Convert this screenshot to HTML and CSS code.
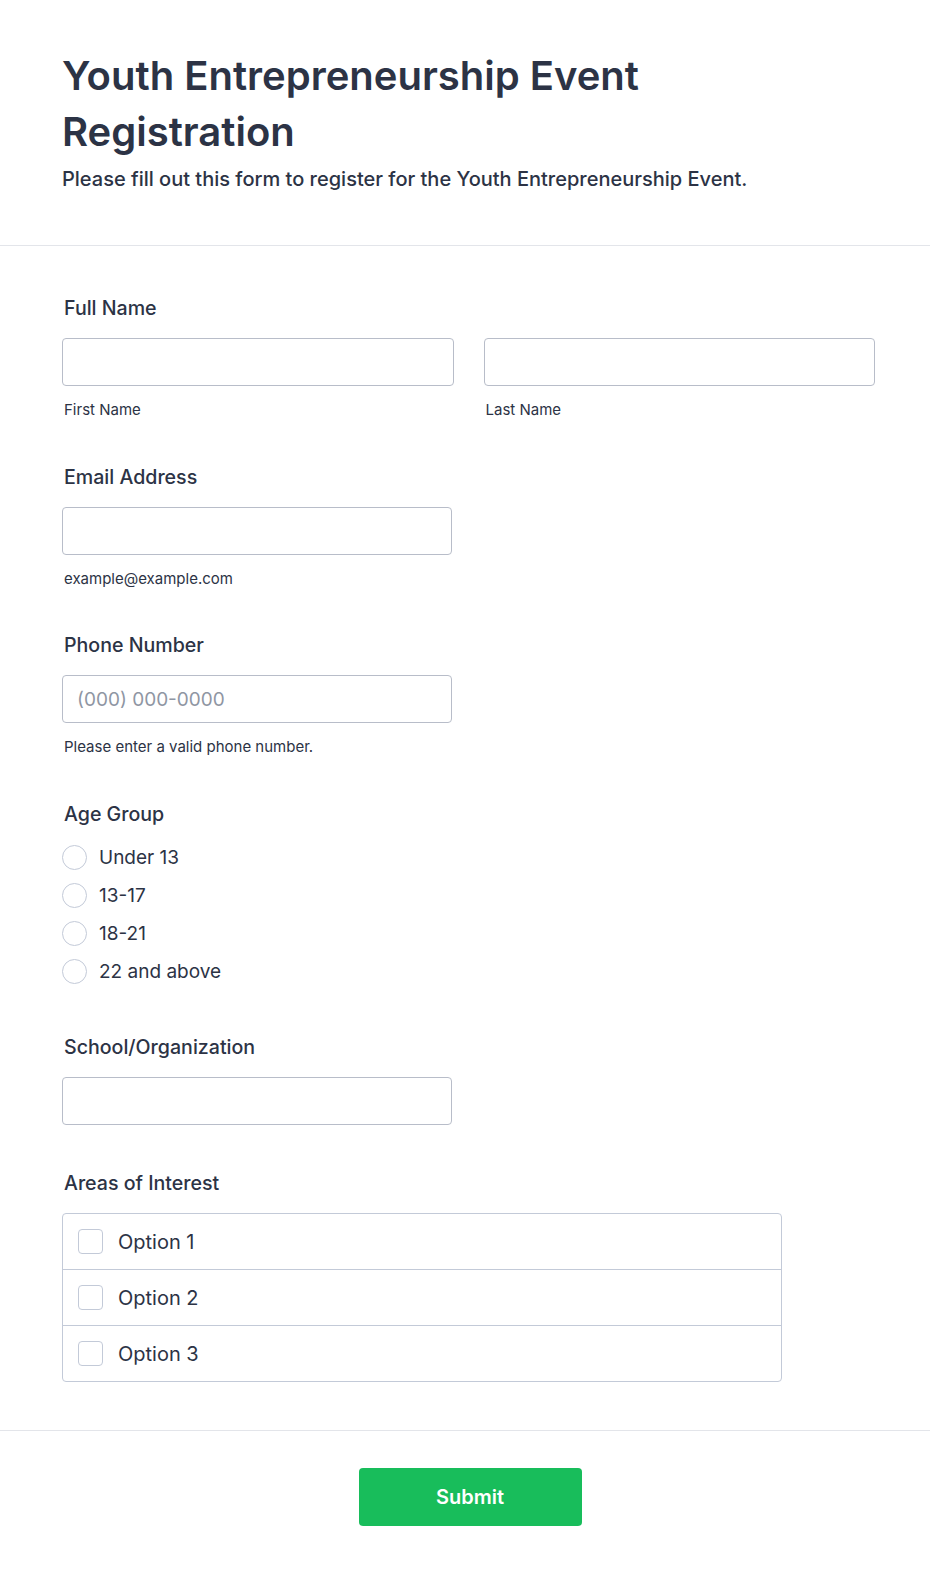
FILE: index.html
```html
<!DOCTYPE html>
<html>
<head>
    <title>Youth Entrepreneurship Event Registration</title>
    <link rel="stylesheet" href="styles.css">
</head>
<body>
    <div class="page-wrapper">
        <header class="form-header">
            <h1>Youth Entrepreneurship Event Registration</h1>
            <p class="form-subtitle">Please fill out this form to register for the Youth Entrepreneurship Event.</p>
        </header>
        <form class="form-body" onsubmit="event.preventDefault()">
            <div class="field">
                <label class="field-label">Full Name</label>
                <div class="name-row">
                    <div class="name-col">
                        <input type="text" class="text-input" name="firstName">
                        <span class="sublabel">First Name</span>
                    </div>
                    <div class="name-col">
                        <input type="text" class="text-input" name="lastName">
                        <span class="sublabel">Last Name</span>
                    </div>
                </div>
            </div>
            <div class="field">
                <label class="field-label" for="email">Email Address</label>
                <input type="email" id="email" class="text-input half" name="email">
                <span class="sublabel">example@example.com</span>
            </div>
            <div class="field">
                <label class="field-label" for="phone">Phone Number</label>
                <input type="tel" id="phone" class="text-input half" name="phone" placeholder="(000) 000-0000">
                <span class="sublabel">Please enter a valid phone number.</span>
            </div>
            <div class="field">
                <label class="field-label">Age Group</label>
                <div class="radio-list">
                    <label class="radio-item"><input type="radio" name="age"><span class="radio-mark"></span>Under 13</label>
                    <label class="radio-item"><input type="radio" name="age"><span class="radio-mark"></span>13-17</label>
                    <label class="radio-item"><input type="radio" name="age"><span class="radio-mark"></span>18-21</label>
                    <label class="radio-item"><input type="radio" name="age"><span class="radio-mark"></span>22 and above</label>
                </div>
            </div>
            <div class="field">
                <label class="field-label" for="school">School/Organization</label>
                <input type="text" id="school" class="text-input half" name="school">
            </div>
            <div class="field field-interest">
                <label class="field-label">Areas of Interest</label>
                <div class="check-box">
                    <label class="check-item"><input type="checkbox" name="interest"><span class="check-mark"></span>Option 1</label>
                    <label class="check-item"><input type="checkbox" name="interest"><span class="check-mark"></span>Option 2</label>
                    <label class="check-item"><input type="checkbox" name="interest"><span class="check-mark"></span>Option 3</label>
                </div>
            </div>
        </form>
        <footer class="form-footer">
            <button type="submit" class="btn-submit">Submit</button>
        </footer>
    </div>
</body>
</html>
```

FILE: styles.css
```css
:root {
    --text-color: #2c3345;
    --border-color: #b8bdc9;
    --control-border: #c3cad8;
    --divider: #e3e5ea;
    --placeholder: #8f96a3;
    --green: #18bd5b;
    --white: #ffffff;
}
* {
    box-sizing: border-box;
}
body {
    margin: 0;
    font-family: Inter, "Noto Sans", sans-serif;
    color: var(--text-color);
    background-color: var(--white);
}
.form-header {
    padding: 48px 62px 54px;
    border-bottom: 1px solid var(--divider);
}
h1 {
    margin: 0;
    font-size: 40px;
    line-height: 56px;
    font-weight: 600;
    max-width: 620px;
}
.form-subtitle {
    margin: 7px 0 0;
    font-size: 20px;
    line-height: 24px;
    font-weight: 500;
}
.form-body {
    display: flex;
    flex-direction: column;
    gap: 44.7px;
    padding: 50px 62px 48px;
    border-bottom: 1px solid var(--divider);
}
.field {
    display: flex;
    flex-direction: column;
    align-items: flex-start;
}
.field-interest {
    margin-top: 2px;
}
.field-label {
    font-size: 19.6px;
    line-height: 24px;
    font-weight: 500;
    padding-left: 2px;
    margin-bottom: 18px;
}
.name-row {
    display: flex;
    gap: 30px;
    width: 813px;
}
.name-col {
    flex: 1;
    display: flex;
    flex-direction: column;
}
.text-input {
    width: 100%;
    height: 48px;
    padding: 0 14px;
    border: 1px solid var(--border-color);
    border-radius: 4px;
    font-family: inherit;
    font-size: 19px;
    color: var(--text-color);
}
.text-input.half {
    width: 390px;
}
.text-input::placeholder {
    color: var(--placeholder);
}
.text-input:focus {
    outline: none;
    border-color: #2e69ff;
}
.sublabel {
    margin-top: 14px;
    padding-left: 2px;
    font-size: 15px;
    line-height: 20px;
}
.field-label + .radio-list {
    margin-top: -6px;
}
.radio-list {
    display: flex;
    flex-direction: column;
}
.radio-item,
.check-item {
    display: flex;
    align-items: center;
    cursor: pointer;
}
.radio-item {
    height: 38px;
    font-size: 19px;
}
.radio-item input,
.check-item input {
    display: none;
}
.radio-mark {
    width: 25px;
    height: 25px;
    border: 1px solid var(--control-border);
    border-radius: 50%;
    margin-right: 12px;
}
.check-box {
    width: 720px;
    border: 1px solid var(--control-border);
    border-radius: 4px;
}
.check-item {
    height: 56px;
    padding-left: 15px;
    font-size: 20px;
    border-bottom: 1px solid var(--control-border);
}
.check-item:last-child {
    height: 55px;
    border-bottom: none;
}
.check-mark {
    width: 25px;
    height: 25px;
    border: 1px solid var(--control-border);
    border-radius: 4px;
    margin-right: 15px;
}
.form-footer {
    display: flex;
    justify-content: center;
    padding: 37px 0 58px 10px;
}
.btn-submit {
    width: 223px;
    height: 58px;
    border: none;
    border-radius: 4px;
    background-color: var(--green);
    color: var(--white);
    font-family: inherit;
    font-size: 20px;
    font-weight: 600;
    cursor: pointer;
}
.btn-submit:hover {
    background-color: #16aa52;
}
```
